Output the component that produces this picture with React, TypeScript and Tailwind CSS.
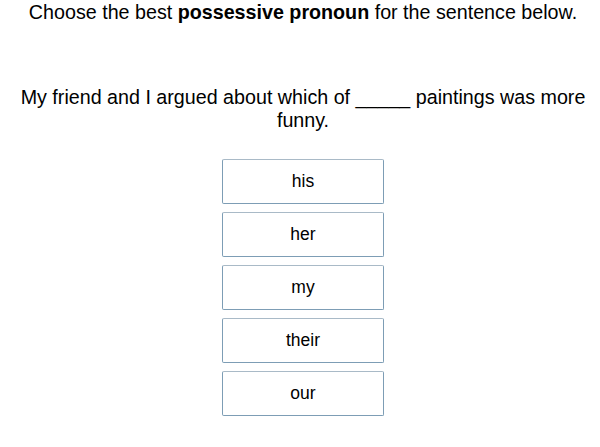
const options = ['his', 'her', 'my', 'their', 'our']

export default function App() {
  return (
    <div className="w-[600px] h-[447px] bg-white text-black font-['Liberation_Sans',Arial,sans-serif] pl-[6px] flex flex-col items-center">
      <h1 className="text-[19.7px] leading-[24px] font-normal text-center whitespace-nowrap">
        Choose the best <b>possessive pronoun</b> for the sentence below.
      </h1>
      <p className="mt-[62px] text-[19.7px] leading-[23px] text-center px-[6px]">
        My friend and I argued about which of _____ paintings was more funny.
      </p>
      <div className="mt-[27px] flex flex-col gap-[8px]">
        {options.map(o => (
          <button
            key={o}
            className="w-[162px] h-[45px] rounded-[2px] border border-[#7d9db5] border-t-[#a9bac7] bg-white text-[17.5px] text-black flex items-center justify-center"
          >
            {o}
          </button>
        ))}
      </div>
    </div>
  )
}
